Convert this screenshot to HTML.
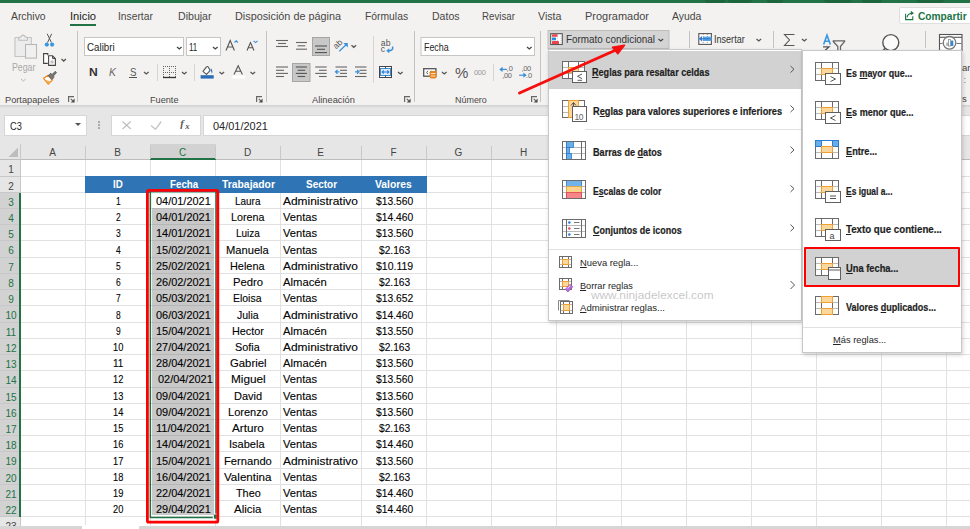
<!DOCTYPE html><html><head><meta charset="utf-8"><style>
*{margin:0;padding:0;box-sizing:border-box}
html,body{width:970px;height:529px;overflow:hidden;background:#fff;font-family:"Liberation Sans", sans-serif;}
.a{position:absolute}
.t{position:absolute;white-space:nowrap;line-height:1}
</style></head><body><div class="a" style="left:0;top:0;width:970px;height:3px;background:#217346"></div>
<svg class="a" style="left:0;top:0" width="970" height="3"><g fill="#1a5a37" opacity="0.55"><ellipse cx="715" cy="1" rx="10" ry="3"/><ellipse cx="740" cy="1" rx="12" ry="3"/><ellipse cx="775" cy="1" rx="8" ry="3"/><ellipse cx="838" cy="1" rx="14" ry="3"/><ellipse cx="872" cy="1" rx="10" ry="3"/><ellipse cx="930" cy="1" rx="14" ry="3"/></g></svg>
<div class="a" style="left:0;top:3px;width:970px;height:102px;background:#f3f2f1"></div>
<div class="a" style="left:0;top:105px;width:970px;height:39px;background:#e6e6e6"></div>
<div class="a" style="left:0;top:105px;width:970px;height:3px;background:linear-gradient(#d0d0d0,#e6e6e6)"></div>
<div class="t" style="left:11.20px;top:10.79px;font-size:10.6px;font-weight:400;color:#484644;transform:scaleX(0.9793);transform-origin:0 0;">Archivo</div>
<div class="t" style="left:69.70px;top:10.79px;font-size:10.6px;font-weight:400;color:#1b1a19;transform:scaleX(1.0548);transform-origin:0 0;">Inicio</div>
<div class="t" style="left:118.40px;top:10.79px;font-size:10.6px;font-weight:400;color:#484644;transform:scaleX(0.9701);transform-origin:0 0;">Insertar</div>
<div class="t" style="left:177.60px;top:10.79px;font-size:10.6px;font-weight:400;color:#484644;transform:scaleX(0.9990);transform-origin:0 0;">Dibujar</div>
<div class="t" style="left:235.30px;top:10.79px;font-size:10.6px;font-weight:400;color:#484644;transform:scaleX(1.0226);transform-origin:0 0;">Disposición de página</div>
<div class="t" style="left:364.60px;top:10.79px;font-size:10.6px;font-weight:400;color:#484644;transform:scaleX(0.9760);transform-origin:0 0;">Fórmulas</div>
<div class="t" style="left:431.60px;top:10.79px;font-size:10.6px;font-weight:400;color:#484644;transform:scaleX(0.9935);transform-origin:0 0;">Datos</div>
<div class="t" style="left:481.90px;top:10.79px;font-size:10.6px;font-weight:400;color:#484644;transform:scaleX(0.9153);transform-origin:0 0;">Revisar</div>
<div class="t" style="left:538.20px;top:10.79px;font-size:10.6px;font-weight:400;color:#484644;transform:scaleX(1.0056);transform-origin:0 0;">Vista</div>
<div class="t" style="left:584.50px;top:10.79px;font-size:10.6px;font-weight:400;color:#484644;transform:scaleX(1.0354);transform-origin:0 0;">Programador</div>
<div class="t" style="left:672.30px;top:10.79px;font-size:10.6px;font-weight:400;color:#484644;transform:scaleX(0.9848);transform-origin:0 0;">Ayuda</div>
<div class="a" style="left:70px;top:24px;width:26px;height:2px;background:#217346"></div>
<div class="a" style="left:899px;top:7px;width:80px;height:17px;background:#fff;border:1px solid #e1dfdd;border-radius:2px"></div>
<svg class="a" style="left:0;top:0" width="970" height="30"><path d="M905.6 13.8 V19.6 H912.8 V16.2" fill="none" stroke="#217346" stroke-width="1.1"/><path d="M907 17.5 Q907.5 13.5 912.5 13" fill="none" stroke="#217346" stroke-width="1.1"/><path d="M910.8 10.8 L914 13.2 L910.8 15.3 Z" fill="#217346"/></svg>
<div class="t" style="left:918.00px;top:10.95px;font-size:11px;font-weight:700;color:#217346;transform:scaleX(0.9253);transform-origin:0 0;">Compartir</div>
<svg class="a" style="left:0;top:0" width="970" height="110"><line x1="77.5" y1="31" x2="77.5" y2="102" stroke="#c6c4c2" stroke-width="1"/><line x1="266.5" y1="31" x2="266.5" y2="102" stroke="#c6c4c2" stroke-width="1"/><line x1="414.5" y1="31" x2="414.5" y2="102" stroke="#c6c4c2" stroke-width="1"/><line x1="540.5" y1="31" x2="540.5" y2="102" stroke="#c6c4c2" stroke-width="1"/><line x1="689.5" y1="31" x2="689.5" y2="48" stroke="#c6c4c2" stroke-width="1"/><line x1="773.5" y1="31" x2="773.5" y2="48" stroke="#c6c4c2" stroke-width="1"/><line x1="925.5" y1="31" x2="925.5" y2="48" stroke="#c6c4c2" stroke-width="1"/><line x1="157.5" y1="64" x2="157.5" y2="81" stroke="#d8d6d4" stroke-width="1"/><line x1="194.5" y1="64" x2="194.5" y2="81" stroke="#d8d6d4" stroke-width="1"/><line x1="373.5" y1="36" x2="373.5" y2="83" stroke="#d8d6d4" stroke-width="1"/><line x1="493.5" y1="64" x2="493.5" y2="81" stroke="#d8d6d4" stroke-width="1"/><path d="M68.6 102 V96.6 H74" fill="none" stroke="#666" stroke-width="1.2"/><path d="M70.8 98.8 L74 102" fill="none" stroke="#666" stroke-width="1.2"/><path d="M74.6 98.6 V102.6 H70.6 Z" fill="#555"/><path d="M256.6 102 V96.6 H262" fill="none" stroke="#666" stroke-width="1.2"/><path d="M258.8 98.8 L262 102" fill="none" stroke="#666" stroke-width="1.2"/><path d="M262.6 98.6 V102.6 H258.6 Z" fill="#555"/><path d="M404.6 102 V96.6 H410" fill="none" stroke="#666" stroke-width="1.2"/><path d="M406.8 98.8 L410 102" fill="none" stroke="#666" stroke-width="1.2"/><path d="M410.6 98.6 V102.6 H406.6 Z" fill="#555"/><path d="M531.6 102 V96.6 H537" fill="none" stroke="#666" stroke-width="1.2"/><path d="M533.8 98.8 L537 102" fill="none" stroke="#666" stroke-width="1.2"/><path d="M537.6 98.6 V102.6 H533.6 Z" fill="#555"/><path d="M15 37.5 H31.3 V56.5 H15 Z" fill="#ececec" stroke="#c4c4c4" stroke-width="1.1"/><path d="M18.8 40.3 V37.3 H20.6 Q23.1 33 25.6 37.3 H27.4 V40.3 Z" fill="#efefef" stroke="#bdbdbd" stroke-width="1.1" stroke-linejoin="round"/><rect x="25.5" y="44.5" width="11" height="13.6" fill="#f0f0f0" stroke="#b8b8b8" stroke-width="1.1"/><path d="M21 79 L23.3 81 L25.6 79" fill="none" stroke="#b5b5b5" stroke-width="1"/><path d="M47.2 33.8 L51.4 42.5 M51.7 33.8 L47.5 42.5" fill="none" stroke="#555" stroke-width="1"/><circle cx="46.8" cy="44.6" r="2.1" fill="#3b97e0"/><circle cx="52.1" cy="44.6" r="2.1" fill="#3b97e0"/><path d="M47.8 55.2 V53.6 H43.6 V63.4 H47.8" fill="#fff" stroke="#444" stroke-width="1.1"/><path d="M48.6 55.8 H52.6 L55.4 58.6 V65.4 H48.6 Z" fill="#fff" stroke="#444" stroke-width="1.1" stroke-linejoin="round"/><path d="M52.6 56 V58.6 H55.2" fill="none" stroke="#444" stroke-width="1"/><path d="M50.5 61.2 H53.5 M50.5 62.8 H53.5" stroke="#999" stroke-width="0.9"/><path d="M61.5 59 L63.7 61 L65.9 59" fill="none" stroke="#555" stroke-width="1.3"/><path d="M43.6 78.3 L48.2 75.3 L52.3 80.1 L48.3 84 Z" fill="#fff" stroke="#e8841a" stroke-width="1.2" stroke-linejoin="round"/><path d="M45.5 80 L51 81.5 L48.3 84 Z" fill="#f6b24a"/><path d="M48.3 75.5 L50.8 73.2 L54.2 77 L52 79.5 Z" fill="#777" stroke="#555" stroke-width="0.8"/><path d="M52 74.6 L55.3 71.3 L56.5 72.7 L53.4 76" fill="#777" stroke="#555" stroke-width="0.8"/><rect x="84.5" y="37.5" width="99" height="18" fill="#fff" stroke="#c8c6c4"/><rect x="186.5" y="37.5" width="34" height="18" fill="#fff" stroke="#c8c6c4"/><path d="M177 47 L179.3 49 L181.6 47" fill="none" stroke="#444" stroke-width="1.3"/><path d="M213 47 L215.3 49 L217.6 47" fill="none" stroke="#444" stroke-width="1.3"/><path d="M226 50.5 L230.2 40.5 L234.4 50.5 M227.6 47 H232.8" fill="none" stroke="#555" stroke-width="1.1"/><path d="M234.5 42.5 L236.2 40.8 L237.9 42.5" fill="none" stroke="#3b8fd9" stroke-width="1.1"/><path d="M247 50.5 L250.5 42.5 L254 50.5 M248.3 47.8 H252.7" fill="none" stroke="#555" stroke-width="1.1"/><path d="M253.6 40.8 L255.6 42.6 L257.6 40.8" fill="none" stroke="#3b8fd9" stroke-width="1.1"/><path d="M351.5 45.3 L353.8 47.3 L356.1 45.3" fill="none" stroke="#555" stroke-width="1.3"/><path d="M144 72 L146.3 74 L148.6 72" fill="none" stroke="#555" stroke-width="1.3"/><path d="M182 72 L184.3 74 L186.6 72" fill="none" stroke="#555" stroke-width="1.3"/><path d="M219.5 72 L221.8 74 L224.1 72" fill="none" stroke="#555" stroke-width="1.3"/><path d="M250.5 72 L252.8 74 L255.1 72" fill="none" stroke="#555" stroke-width="1.3"/><path d="M398 72 L400.3 74 L402.6 72" fill="none" stroke="#555" stroke-width="1.3"/><path d="M442 72 L444.3 74 L446.6 72" fill="none" stroke="#555" stroke-width="1.3"/><g fill="#666"><rect x="163" y="66" width="1" height="1"/><rect x="163" y="72" width="1" height="1"/><rect x="165" y="66" width="1" height="1"/><rect x="165" y="72" width="1" height="1"/><rect x="167" y="66" width="1" height="1"/><rect x="167" y="72" width="1" height="1"/><rect x="169" y="66" width="1" height="1"/><rect x="169" y="72" width="1" height="1"/><rect x="171" y="66" width="1" height="1"/><rect x="171" y="72" width="1" height="1"/><rect x="173" y="66" width="1" height="1"/><rect x="173" y="72" width="1" height="1"/><rect x="175" y="66" width="1" height="1"/><rect x="175" y="72" width="1" height="1"/><rect x="163" y="66" width="1" height="1"/><rect x="175" y="66" width="1" height="1"/><rect x="169" y="66" width="1" height="1"/><rect x="163" y="68" width="1" height="1"/><rect x="175" y="68" width="1" height="1"/><rect x="169" y="68" width="1" height="1"/><rect x="163" y="70" width="1" height="1"/><rect x="175" y="70" width="1" height="1"/><rect x="169" y="70" width="1" height="1"/><rect x="163" y="72" width="1" height="1"/><rect x="175" y="72" width="1" height="1"/><rect x="169" y="72" width="1" height="1"/><rect x="163" y="74" width="1" height="1"/><rect x="175" y="74" width="1" height="1"/><rect x="169" y="74" width="1" height="1"/><rect x="163" y="76" width="1" height="1"/><rect x="175" y="76" width="1" height="1"/><rect x="169" y="76" width="1" height="1"/></g><path d="M163 77.5 H176" stroke="#333" stroke-width="1.3"/><path d="M203 71.3 L206.3 67.2 Q207.5 65.8 208.4 67.2 L209.6 69.5 L210 70.6 L206.5 74.4 Z" fill="#fff" stroke="#555" stroke-width="1.1" stroke-linejoin="round"/><path d="M210.8 68.3 Q213.2 70 212 73.8 Q211.3 71.5 210.6 70.6 Z" fill="#2b7cd3"/><rect x="200.6" y="75.2" width="13.1" height="3.4" fill="#2b6cb8"/><path d="M234 74.5 L238.2 65.8 L242.4 74.5 M235.6 71.3 H240.8" fill="none" stroke="#555" stroke-width="1.1"/><rect x="232.5" y="75.5" width="12.5" height="3" fill="#fff"/><path d="M276 40.5 H288" stroke="#666" stroke-width="1.1"/><path d="M278 43.5 H286" stroke="#666" stroke-width="1.1"/><path d="M276 46.5 H288" stroke="#666" stroke-width="1.1"/><path d="M296 42.5 H307" stroke="#666" stroke-width="1.1"/><path d="M297.6 45.8 H305.3" stroke="#666" stroke-width="1.1"/><path d="M296 49.2 H307" stroke="#666" stroke-width="1.1"/><rect x="312.5" y="37.5" width="17" height="18" fill="#c8c8c8" stroke="#a6a6a6"/><path d="M315 46 H327" stroke="#555" stroke-width="1.1"/><path d="M317 49.3 H325" stroke="#555" stroke-width="1.1"/><path d="M315 52.6 H327" stroke="#555" stroke-width="1.1"/><text x="0" y="0" transform="translate(336.3,49.5) rotate(-45)" font-family="Liberation Sans" font-size="8.5" fill="#555">ab</text><path d="M339.3 51.3 L346.5 44.2" stroke="#3b8fd9" stroke-width="1.2"/><path d="M343.3 43 L347.8 43 L347.8 47.5 Z" fill="#3b8fd9"/><path d="M276 67 H288" stroke="#666" stroke-width="1.1"/><path d="M276 70.3 H284" stroke="#666" stroke-width="1.1"/><path d="M276 73.4 H288" stroke="#666" stroke-width="1.1"/><path d="M276 76.5 H284" stroke="#666" stroke-width="1.1"/><rect x="292.5" y="63.5" width="17.5" height="18" fill="#c8c8c8" stroke="#a6a6a6"/><path d="M295.8 67 H307" stroke="#555" stroke-width="1.1"/><path d="M297.6 70.3 H305.2" stroke="#555" stroke-width="1.1"/><path d="M295.8 73.4 H307" stroke="#555" stroke-width="1.1"/><path d="M297.6 76.5 H305.2" stroke="#555" stroke-width="1.1"/><path d="M315.2 67 H326.7" stroke="#666" stroke-width="1.1"/><path d="M319 70.3 H326.7" stroke="#666" stroke-width="1.1"/><path d="M315.2 73.4 H326.7" stroke="#666" stroke-width="1.1"/><path d="M319 76.5 H326.7" stroke="#666" stroke-width="1.1"/><path d="M335.5 67 H347" stroke="#666" stroke-width="1.1"/><path d="M335.5 76.5 H347" stroke="#666" stroke-width="1.1"/><path d="M340 70.3 H347" stroke="#666" stroke-width="1.1"/><path d="M340 73.4 H347" stroke="#666" stroke-width="1.1"/><path d="M335.5 71.8 H339.5 M337.5 69.8 L335.5 71.8 L337.5 73.8" fill="none" stroke="#3b8fd9" stroke-width="1.2"/><path d="M355 67 H366.5" stroke="#666" stroke-width="1.1"/><path d="M355 76.5 H366.5" stroke="#666" stroke-width="1.1"/><path d="M359.5 70.3 H366.5" stroke="#666" stroke-width="1.1"/><path d="M359.5 73.4 H366.5" stroke="#666" stroke-width="1.1"/><path d="M355 71.8 H359 M357 69.8 L359 71.8 L357 73.8" fill="none" stroke="#3b8fd9" stroke-width="1.2"/><text x="380.8" y="46" font-family="Liberation Sans" font-size="8.6" fill="#555" letter-spacing="0.2">ab</text><text x="380.8" y="52.3" font-family="Liberation Sans" font-size="8.6" fill="#555">c</text><path d="M392.6 46.5 Q393.5 51 388.3 50.8" fill="none" stroke="#3b8fd9" stroke-width="1.5"/><path d="M386.2 50.8 L389.3 48.3 V53.3 Z" fill="#3b8fd9"/><rect x="379.5" y="66.5" width="12" height="11" fill="#fff" stroke="#444" stroke-width="1"/><rect x="380.5" y="68.5" width="10" height="7" fill="#dcecfb" stroke="#3b8fd9" stroke-width="1"/><path d="M385.5 66.5 V68.5 M385.5 75.5 V77.5" stroke="#444"/><path d="M383.5 72 H387.5" stroke="#2b7cd3" stroke-width="1"/><path d="M381.3 72 L383.8 69.8 V74.2 Z M389.7 72 L387.2 69.8 V74.2 Z" fill="#2b7cd3"/><rect x="421" y="37.5" width="113.5" height="18" fill="#fff" stroke="#c8c6c4"/><path d="M527 47 L529.3 49 L531.6 47" fill="none" stroke="#444" stroke-width="1.3"/><rect x="423.7" y="68.7" width="12.2" height="7.5" fill="#fff" stroke="#555" stroke-width="1.3"/><path d="M427.8 70.8 Q425.6 72.4 427.8 74.2 M431.2 70.8 Q429 72.4 431.2 74.2" fill="none" stroke="#555" stroke-width="1"/><rect x="429.6" y="71.1" width="7" height="7.5" rx="1.8" fill="#e8841a"/><path d="M430.8 73.6 H435.4 M430.8 76 H435.4" stroke="#fff" stroke-width="0.8"/><text x="455" y="78.2" font-family="Liberation Sans" font-size="15" fill="#555">%</text><text x="474" y="75" font-family="Liberation Sans" font-size="7.5" fill="#999" letter-spacing="-0.3">000</text><text x="506.6" y="71" font-family="Liberation Sans" font-size="7.5" fill="#666">,0</text><text x="502.3" y="77.8" font-family="Liberation Sans" font-size="7.5" fill="#666" letter-spacing="-0.4">,00</text><path d="M500.5 69.4 H506.9" stroke="#3b8fd9" stroke-width="1.2"/><path d="M499.3 69.4 L502.6 66.8 V72 Z" fill="#3b8fd9"/><text x="521.5" y="71" font-family="Liberation Sans" font-size="7.5" fill="#666" letter-spacing="-0.4">,00</text><text x="525.8" y="77.8" font-family="Liberation Sans" font-size="7.5" fill="#666">.0</text><path d="M519.1 75.2 H525.5" stroke="#3b8fd9" stroke-width="1.2"/><path d="M526.7 75.2 L523.4 72.6 V77.8 Z" fill="#3b8fd9"/></svg>
<div class="t" style="left:12.00px;top:62.84px;font-size:10.3px;font-weight:400;color:#a8a8a8;transform:scaleX(0.8485);transform-origin:0 0;">Pegar</div>
<div class="t" style="left:87.10px;top:41.59px;font-size:10.6px;font-weight:400;color:#262626;transform:scaleX(0.9202);transform-origin:0 0;">Calibri</div>
<div class="t" style="left:189.00px;top:42.19px;font-size:10.6px;font-weight:400;color:#262626;transform:scaleX(0.7564);transform-origin:0 0;">11</div>
<div class="t" style="left:423.60px;top:41.69px;font-size:10.6px;font-weight:400;color:#262626;transform:scaleX(0.8392);transform-origin:0 0;">Fecha</div>
<div class="t" style="left:88.60px;top:66.95px;font-size:11px;font-weight:700;color:#333;transform:scaleX(1.1000);transform-origin:0 0;">N</div>
<div class="t" style="left:109.00px;top:66.95px;font-size:11px;font-weight:400;color:#666;font-style:italic;transform:scaleX(0.9375);transform-origin:0 0;">K</div>
<div class="t" style="left:129.50px;top:66.88px;font-size:10.5px;font-weight:400;color:#555;transform:scaleX(0.9286);transform-origin:0 0;">S</div>
<div class="a" style="left:129px;top:76.5px;width:7.5px;height:1px;background:#555"></div>
<div class="t" style="left:5.10px;top:95.88px;font-size:8.5px;font-weight:400;color:#484644;transform:scaleX(1.0855);transform-origin:0 0;">Portapapeles</div>
<div class="t" style="left:150.40px;top:95.88px;font-size:8.5px;font-weight:400;color:#484644;transform:scaleX(1.0772);transform-origin:0 0;">Fuente</div>
<div class="t" style="left:311.50px;top:95.88px;font-size:8.5px;font-weight:400;color:#484644;transform:scaleX(1.0938);transform-origin:0 0;">Alineación</div>
<div class="t" style="left:454.80px;top:95.88px;font-size:8.5px;font-weight:400;color:#484644;transform:scaleX(1.0523);transform-origin:0 0;">Número</div>
<div class="a" style="left:4px;top:115px;width:83px;height:21px;background:#fff;border:1px solid #d6d6d6"></div>
<div class="t" style="left:9.60px;top:121.09px;font-size:10.6px;font-weight:400;color:#262626;transform:scaleX(0.8718);transform-origin:0 0;">C3</div>
<div class="a" style="left:75px;top:123px;width:0;height:0;border-left:3px solid transparent;border-right:3px solid transparent;border-top:3px solid #555"></div>
<div class="a" style="left:98px;top:121px;width:2px;height:2px;background:#aaa"></div>
<div class="a" style="left:98px;top:124px;width:2px;height:2px;background:#aaa"></div>
<div class="a" style="left:98px;top:127px;width:2px;height:2px;background:#aaa"></div>
<div class="a" style="left:111px;top:115px;width:90px;height:21px;background:#fff;border:1px solid #d6d6d6"></div>
<div class="a" style="left:203px;top:115px;width:780px;height:21px;background:#fff;border:1px solid #d6d6d6"></div>
<div class="t" style="left:213.00px;top:121.09px;font-size:10.6px;font-weight:400;color:#262626;transform:scaleX(1.0352);transform-origin:0 0;">04/01/2021</div>
<svg class="a" style="left:0;top:0" width="300" height="140"><path d="M122.5 121.5 L130.8 129 M130.8 121.5 L122.5 129" stroke="#bdbdbd" stroke-width="1.1"/><path d="M151 125.5 L155.5 129.3 L161.2 121.5" fill="none" stroke="#c4c4c4" stroke-width="1.3"/></svg>
<div class="t" style="left:180.3px;top:118.8px;font-size:10.5px;font-family:'Liberation Serif',serif;font-style:italic;font-weight:bold;color:#555">f</div>
<div class="t" style="left:185.2px;top:122.2px;font-size:8.5px;font-family:'Liberation Serif',serif;font-style:italic;font-weight:bold;color:#555">x</div>
<div class="a" style="left:0;top:144px;width:970px;height:16px;background:#e6e6e6"></div>
<div class="a" style="left:150px;top:144px;width:66px;height:16px;background:#d2d2d2"></div>
<div class="a" style="left:0;top:159px;width:970px;height:1px;background:#bdbdbd"></div>
<div class="a" style="left:150px;top:158px;width:66px;height:2px;background:#217346"></div>
<div class="a" style="left:85px;top:146px;width:1px;height:13px;background:#c8c8c8"></div>
<div class="t" style="left:20px;top:148px;width:65px;text-align:center;font-size:10px;color:#444">A</div>
<div class="a" style="left:150px;top:146px;width:1px;height:13px;background:#c8c8c8"></div>
<div class="t" style="left:85px;top:148px;width:65px;text-align:center;font-size:10px;color:#444">B</div>
<div class="a" style="left:215px;top:146px;width:1px;height:13px;background:#c8c8c8"></div>
<div class="t" style="left:150px;top:148px;width:65px;text-align:center;font-size:10px;color:#217346">C</div>
<div class="a" style="left:280px;top:146px;width:1px;height:13px;background:#c8c8c8"></div>
<div class="t" style="left:215px;top:148px;width:65px;text-align:center;font-size:10px;color:#444">D</div>
<div class="a" style="left:361px;top:146px;width:1px;height:13px;background:#c8c8c8"></div>
<div class="t" style="left:280px;top:148px;width:81px;text-align:center;font-size:10px;color:#444">E</div>
<div class="a" style="left:426px;top:146px;width:1px;height:13px;background:#c8c8c8"></div>
<div class="t" style="left:361px;top:148px;width:65px;text-align:center;font-size:10px;color:#444">F</div>
<div class="a" style="left:491px;top:146px;width:1px;height:13px;background:#c8c8c8"></div>
<div class="t" style="left:426px;top:148px;width:65px;text-align:center;font-size:10px;color:#444">G</div>
<div class="a" style="left:556px;top:146px;width:1px;height:13px;background:#c8c8c8"></div>
<div class="t" style="left:491px;top:148px;width:65px;text-align:center;font-size:10px;color:#444">H</div>
<div class="a" style="left:621px;top:146px;width:1px;height:13px;background:#c8c8c8"></div>
<div class="t" style="left:556px;top:148px;width:65px;text-align:center;font-size:10px;color:#444">I</div>
<div class="a" style="left:686px;top:146px;width:1px;height:13px;background:#c8c8c8"></div>
<div class="t" style="left:621px;top:148px;width:65px;text-align:center;font-size:10px;color:#444">J</div>
<div class="a" style="left:751px;top:146px;width:1px;height:13px;background:#c8c8c8"></div>
<div class="t" style="left:686px;top:148px;width:65px;text-align:center;font-size:10px;color:#444">K</div>
<div class="a" style="left:816px;top:146px;width:1px;height:13px;background:#c8c8c8"></div>
<div class="t" style="left:751px;top:148px;width:65px;text-align:center;font-size:10px;color:#444">L</div>
<div class="a" style="left:881px;top:146px;width:1px;height:13px;background:#c8c8c8"></div>
<div class="t" style="left:816px;top:148px;width:65px;text-align:center;font-size:10px;color:#444">M</div>
<div class="a" style="left:946px;top:146px;width:1px;height:13px;background:#c8c8c8"></div>
<div class="t" style="left:881px;top:148px;width:65px;text-align:center;font-size:10px;color:#444">N</div>
<div class="a" style="left:1011px;top:146px;width:1px;height:13px;background:#c8c8c8"></div>
<div class="t" style="left:946px;top:148px;width:65px;text-align:center;font-size:10px;color:#444">O</div>
<div class="a" style="left:20px;top:144px;width:1px;height:16px;background:#c8c8c8"></div>
<svg class="a" style="left:0;top:144px" width="20" height="16"><path d="M8.5 13 L18 13 L18 3.5 Z" fill="#bdbdbd"/></svg>
<div class="a" style="left:0;top:160px;width:20px;height:369px;background:#e6e6e6"></div>
<div class="a" style="left:0;top:193px;width:20px;height:16px;background:#d2d2d2"></div>
<div class="a" style="left:0;top:209px;width:20px;height:16px;background:#d2d2d2"></div>
<div class="a" style="left:0;top:225px;width:20px;height:16px;background:#d2d2d2"></div>
<div class="a" style="left:0;top:241px;width:20px;height:17px;background:#d2d2d2"></div>
<div class="a" style="left:0;top:258px;width:20px;height:16px;background:#d2d2d2"></div>
<div class="a" style="left:0;top:274px;width:20px;height:16px;background:#d2d2d2"></div>
<div class="a" style="left:0;top:290px;width:20px;height:16px;background:#d2d2d2"></div>
<div class="a" style="left:0;top:306px;width:20px;height:17px;background:#d2d2d2"></div>
<div class="a" style="left:0;top:323px;width:20px;height:16px;background:#d2d2d2"></div>
<div class="a" style="left:0;top:339px;width:20px;height:16px;background:#d2d2d2"></div>
<div class="a" style="left:0;top:355px;width:20px;height:16px;background:#d2d2d2"></div>
<div class="a" style="left:0;top:371px;width:20px;height:17px;background:#d2d2d2"></div>
<div class="a" style="left:0;top:388px;width:20px;height:16px;background:#d2d2d2"></div>
<div class="a" style="left:0;top:404px;width:20px;height:16px;background:#d2d2d2"></div>
<div class="a" style="left:0;top:420px;width:20px;height:16px;background:#d2d2d2"></div>
<div class="a" style="left:0;top:436px;width:20px;height:16px;background:#d2d2d2"></div>
<div class="a" style="left:0;top:452px;width:20px;height:17px;background:#d2d2d2"></div>
<div class="a" style="left:0;top:469px;width:20px;height:16px;background:#d2d2d2"></div>
<div class="a" style="left:0;top:485px;width:20px;height:16px;background:#d2d2d2"></div>
<div class="a" style="left:0;top:501px;width:20px;height:16px;background:#d2d2d2"></div>
<div class="a" style="left:21px;top:176px;width:949px;height:1px;background:#e1e1e1"></div>
<div class="a" style="left:0;top:176px;width:20px;height:1px;background:#c8c8c8"></div>
<div class="a" style="left:21px;top:192px;width:949px;height:1px;background:#e1e1e1"></div>
<div class="a" style="left:0;top:192px;width:20px;height:1px;background:#c8c8c8"></div>
<div class="a" style="left:21px;top:208px;width:949px;height:1px;background:#e1e1e1"></div>
<div class="a" style="left:0;top:208px;width:20px;height:1px;background:#c8c8c8"></div>
<div class="a" style="left:21px;top:224px;width:949px;height:1px;background:#e1e1e1"></div>
<div class="a" style="left:0;top:224px;width:20px;height:1px;background:#c8c8c8"></div>
<div class="a" style="left:21px;top:240px;width:949px;height:1px;background:#e1e1e1"></div>
<div class="a" style="left:0;top:240px;width:20px;height:1px;background:#c8c8c8"></div>
<div class="a" style="left:21px;top:257px;width:949px;height:1px;background:#e1e1e1"></div>
<div class="a" style="left:0;top:257px;width:20px;height:1px;background:#c8c8c8"></div>
<div class="a" style="left:21px;top:273px;width:949px;height:1px;background:#e1e1e1"></div>
<div class="a" style="left:0;top:273px;width:20px;height:1px;background:#c8c8c8"></div>
<div class="a" style="left:21px;top:289px;width:949px;height:1px;background:#e1e1e1"></div>
<div class="a" style="left:0;top:289px;width:20px;height:1px;background:#c8c8c8"></div>
<div class="a" style="left:21px;top:305px;width:949px;height:1px;background:#e1e1e1"></div>
<div class="a" style="left:0;top:305px;width:20px;height:1px;background:#c8c8c8"></div>
<div class="a" style="left:21px;top:322px;width:949px;height:1px;background:#e1e1e1"></div>
<div class="a" style="left:0;top:322px;width:20px;height:1px;background:#c8c8c8"></div>
<div class="a" style="left:21px;top:338px;width:949px;height:1px;background:#e1e1e1"></div>
<div class="a" style="left:0;top:338px;width:20px;height:1px;background:#c8c8c8"></div>
<div class="a" style="left:21px;top:354px;width:949px;height:1px;background:#e1e1e1"></div>
<div class="a" style="left:0;top:354px;width:20px;height:1px;background:#c8c8c8"></div>
<div class="a" style="left:21px;top:370px;width:949px;height:1px;background:#e1e1e1"></div>
<div class="a" style="left:0;top:370px;width:20px;height:1px;background:#c8c8c8"></div>
<div class="a" style="left:21px;top:387px;width:949px;height:1px;background:#e1e1e1"></div>
<div class="a" style="left:0;top:387px;width:20px;height:1px;background:#c8c8c8"></div>
<div class="a" style="left:21px;top:403px;width:949px;height:1px;background:#e1e1e1"></div>
<div class="a" style="left:0;top:403px;width:20px;height:1px;background:#c8c8c8"></div>
<div class="a" style="left:21px;top:419px;width:949px;height:1px;background:#e1e1e1"></div>
<div class="a" style="left:0;top:419px;width:20px;height:1px;background:#c8c8c8"></div>
<div class="a" style="left:21px;top:435px;width:949px;height:1px;background:#e1e1e1"></div>
<div class="a" style="left:0;top:435px;width:20px;height:1px;background:#c8c8c8"></div>
<div class="a" style="left:21px;top:451px;width:949px;height:1px;background:#e1e1e1"></div>
<div class="a" style="left:0;top:451px;width:20px;height:1px;background:#c8c8c8"></div>
<div class="a" style="left:21px;top:468px;width:949px;height:1px;background:#e1e1e1"></div>
<div class="a" style="left:0;top:468px;width:20px;height:1px;background:#c8c8c8"></div>
<div class="a" style="left:21px;top:484px;width:949px;height:1px;background:#e1e1e1"></div>
<div class="a" style="left:0;top:484px;width:20px;height:1px;background:#c8c8c8"></div>
<div class="a" style="left:21px;top:500px;width:949px;height:1px;background:#e1e1e1"></div>
<div class="a" style="left:0;top:500px;width:20px;height:1px;background:#c8c8c8"></div>
<div class="a" style="left:21px;top:516px;width:949px;height:1px;background:#e1e1e1"></div>
<div class="a" style="left:0;top:516px;width:20px;height:1px;background:#c8c8c8"></div>
<div class="a" style="left:85px;top:160px;width:1px;height:369px;background:#e1e1e1"></div>
<div class="a" style="left:150px;top:160px;width:1px;height:369px;background:#e1e1e1"></div>
<div class="a" style="left:215px;top:160px;width:1px;height:369px;background:#e1e1e1"></div>
<div class="a" style="left:280px;top:160px;width:1px;height:369px;background:#e1e1e1"></div>
<div class="a" style="left:361px;top:160px;width:1px;height:369px;background:#e1e1e1"></div>
<div class="a" style="left:426px;top:160px;width:1px;height:369px;background:#e1e1e1"></div>
<div class="a" style="left:491px;top:160px;width:1px;height:369px;background:#e1e1e1"></div>
<div class="a" style="left:556px;top:160px;width:1px;height:369px;background:#e1e1e1"></div>
<div class="a" style="left:621px;top:160px;width:1px;height:369px;background:#e1e1e1"></div>
<div class="a" style="left:686px;top:160px;width:1px;height:369px;background:#e1e1e1"></div>
<div class="a" style="left:751px;top:160px;width:1px;height:369px;background:#e1e1e1"></div>
<div class="a" style="left:816px;top:160px;width:1px;height:369px;background:#e1e1e1"></div>
<div class="a" style="left:881px;top:160px;width:1px;height:369px;background:#e1e1e1"></div>
<div class="a" style="left:946px;top:160px;width:1px;height:369px;background:#e1e1e1"></div>
<div class="a" style="left:1011px;top:160px;width:1px;height:369px;background:#e1e1e1"></div>
<div class="a" style="left:20px;top:160px;width:1px;height:369px;background:#c8c8c8"></div>
<div class="a" style="left:19px;top:193px;width:2px;height:324px;background:#217346"></div>
<div class="t" style="left:1px;top:164.5px;width:20px;text-align:center;font-size:10px;color:#444">1</div>
<div class="t" style="left:1px;top:181.5px;width:20px;text-align:center;font-size:10px;color:#444">2</div>
<div class="t" style="left:1px;top:197.5px;width:20px;text-align:center;font-size:10px;color:#217346">3</div>
<div class="t" style="left:1px;top:213.5px;width:20px;text-align:center;font-size:10px;color:#217346">4</div>
<div class="t" style="left:1px;top:229.5px;width:20px;text-align:center;font-size:10px;color:#217346">5</div>
<div class="t" style="left:1px;top:245.5px;width:20px;text-align:center;font-size:10px;color:#217346">6</div>
<div class="t" style="left:1px;top:262.5px;width:20px;text-align:center;font-size:10px;color:#217346">7</div>
<div class="t" style="left:1px;top:278.5px;width:20px;text-align:center;font-size:10px;color:#217346">8</div>
<div class="t" style="left:1px;top:294.5px;width:20px;text-align:center;font-size:10px;color:#217346">9</div>
<div class="t" style="left:1px;top:310.5px;width:20px;text-align:center;font-size:10px;color:#217346">10</div>
<div class="t" style="left:1px;top:327.5px;width:20px;text-align:center;font-size:10px;color:#217346">11</div>
<div class="t" style="left:1px;top:343.5px;width:20px;text-align:center;font-size:10px;color:#217346">12</div>
<div class="t" style="left:1px;top:359.5px;width:20px;text-align:center;font-size:10px;color:#217346">13</div>
<div class="t" style="left:1px;top:375.5px;width:20px;text-align:center;font-size:10px;color:#217346">14</div>
<div class="t" style="left:1px;top:392.5px;width:20px;text-align:center;font-size:10px;color:#217346">15</div>
<div class="t" style="left:1px;top:408.5px;width:20px;text-align:center;font-size:10px;color:#217346">16</div>
<div class="t" style="left:1px;top:424.5px;width:20px;text-align:center;font-size:10px;color:#217346">17</div>
<div class="t" style="left:1px;top:440.5px;width:20px;text-align:center;font-size:10px;color:#217346">18</div>
<div class="t" style="left:1px;top:456.5px;width:20px;text-align:center;font-size:10px;color:#217346">19</div>
<div class="t" style="left:1px;top:473.5px;width:20px;text-align:center;font-size:10px;color:#217346">20</div>
<div class="t" style="left:1px;top:489.5px;width:20px;text-align:center;font-size:10px;color:#217346">21</div>
<div class="t" style="left:1px;top:505.5px;width:20px;text-align:center;font-size:10px;color:#217346">22</div>
<div class="t" style="left:1px;top:521.5px;width:20px;text-align:center;font-size:10px;color:#444">23</div>
<div class="a" style="left:85px;top:176px;width:342px;height:17px;background:#2f75b5"></div>
<div class="t" style="left:113.40px;top:180.46px;font-size:10.4px;font-weight:700;color:#fff;transform:scaleX(0.9369);transform-origin:0 0;">ID</div>
<div class="t" style="left:169.60px;top:180.46px;font-size:10.4px;font-weight:700;color:#fff;transform:scaleX(0.9388);transform-origin:0 0;">Fecha</div>
<div class="t" style="left:222.40px;top:180.46px;font-size:10.4px;font-weight:700;color:#fff;transform:scaleX(0.9966);transform-origin:0 0;">Trabajador</div>
<div class="t" style="left:305.80px;top:180.46px;font-size:10.4px;font-weight:700;color:#fff;transform:scaleX(0.9599);transform-origin:0 0;">Sector</div>
<div class="t" style="left:375.30px;top:180.46px;font-size:10.4px;font-weight:700;color:#fff;transform:scaleX(0.9922);transform-origin:0 0;">Valores</div>
<div class="a" style="left:152px;top:208px;width:62px;height:307px;background:#c8c8c8"></div>
<div class="a" style="left:152px;top:208px;width:62px;height:1px;background:#b6b6b6"></div>
<div class="a" style="left:152px;top:224px;width:62px;height:1px;background:#b6b6b6"></div>
<div class="a" style="left:152px;top:240px;width:62px;height:1px;background:#b6b6b6"></div>
<div class="a" style="left:152px;top:257px;width:62px;height:1px;background:#b6b6b6"></div>
<div class="a" style="left:152px;top:273px;width:62px;height:1px;background:#b6b6b6"></div>
<div class="a" style="left:152px;top:289px;width:62px;height:1px;background:#b6b6b6"></div>
<div class="a" style="left:152px;top:305px;width:62px;height:1px;background:#b6b6b6"></div>
<div class="a" style="left:152px;top:322px;width:62px;height:1px;background:#b6b6b6"></div>
<div class="a" style="left:152px;top:338px;width:62px;height:1px;background:#b6b6b6"></div>
<div class="a" style="left:152px;top:354px;width:62px;height:1px;background:#b6b6b6"></div>
<div class="a" style="left:152px;top:370px;width:62px;height:1px;background:#b6b6b6"></div>
<div class="a" style="left:152px;top:387px;width:62px;height:1px;background:#b6b6b6"></div>
<div class="a" style="left:152px;top:403px;width:62px;height:1px;background:#b6b6b6"></div>
<div class="a" style="left:152px;top:419px;width:62px;height:1px;background:#b6b6b6"></div>
<div class="a" style="left:152px;top:435px;width:62px;height:1px;background:#b6b6b6"></div>
<div class="a" style="left:152px;top:451px;width:62px;height:1px;background:#b6b6b6"></div>
<div class="a" style="left:152px;top:468px;width:62px;height:1px;background:#b6b6b6"></div>
<div class="a" style="left:152px;top:484px;width:62px;height:1px;background:#b6b6b6"></div>
<div class="a" style="left:152px;top:500px;width:62px;height:1px;background:#b6b6b6"></div>
<div class="t" style="left:115.60px;top:195.91px;font-size:11px;font-weight:400;color:#000;transform:scaleX(0.7667);transform-origin:0 0;-webkit-text-stroke:0.12px #111;">1</div>
<div class="t" style="left:156.30px;top:195.91px;font-size:11px;font-weight:400;color:#000;transform:scaleX(0.9939);transform-origin:0 0;-webkit-text-stroke:0.12px #111;">04/01/2021</div>
<div class="t" style="left:234.90px;top:195.91px;font-size:11px;font-weight:400;color:#000;transform:scaleX(0.9029);transform-origin:0 0;-webkit-text-stroke:0.12px #111;">Laura</div>
<div class="t" style="left:282.80px;top:195.91px;font-size:11px;font-weight:400;color:#000;transform:scaleX(1.0847);transform-origin:0 0;-webkit-text-stroke:0.12px #111;">Administrativo</div>
<div class="t" style="left:375.70px;top:195.91px;font-size:11px;font-weight:400;color:#000;transform:scaleX(0.9358);transform-origin:0 0;-webkit-text-stroke:0.12px #111;">$13.560</div>
<div class="t" style="left:115.60px;top:212.14px;font-size:11px;font-weight:400;color:#000;transform:scaleX(0.7667);transform-origin:0 0;-webkit-text-stroke:0.12px #111;">2</div>
<div class="t" style="left:156.30px;top:212.14px;font-size:11px;font-weight:400;color:#000;transform:scaleX(0.9939);transform-origin:0 0;-webkit-text-stroke:0.12px #111;">04/01/2021</div>
<div class="t" style="left:230.90px;top:212.14px;font-size:11px;font-weight:400;color:#000;transform:scaleX(0.9734);transform-origin:0 0;-webkit-text-stroke:0.12px #111;">Lorena</div>
<div class="t" style="left:282.80px;top:212.14px;font-size:11px;font-weight:400;color:#000;transform:scaleX(1.0106);transform-origin:0 0;-webkit-text-stroke:0.12px #111;">Ventas</div>
<div class="t" style="left:375.70px;top:212.14px;font-size:11px;font-weight:400;color:#000;transform:scaleX(0.9358);transform-origin:0 0;-webkit-text-stroke:0.12px #111;">$14.460</div>
<div class="t" style="left:115.60px;top:228.37px;font-size:11px;font-weight:400;color:#000;transform:scaleX(0.7667);transform-origin:0 0;-webkit-text-stroke:0.12px #111;">3</div>
<div class="t" style="left:156.30px;top:228.37px;font-size:11px;font-weight:400;color:#000;transform:scaleX(0.9939);transform-origin:0 0;-webkit-text-stroke:0.12px #111;">14/01/2021</div>
<div class="t" style="left:235.70px;top:228.37px;font-size:11px;font-weight:400;color:#000;transform:scaleX(0.9051);transform-origin:0 0;-webkit-text-stroke:0.12px #111;">Luiza</div>
<div class="t" style="left:282.80px;top:228.37px;font-size:11px;font-weight:400;color:#000;transform:scaleX(1.0106);transform-origin:0 0;-webkit-text-stroke:0.12px #111;">Ventas</div>
<div class="t" style="left:375.70px;top:228.37px;font-size:11px;font-weight:400;color:#000;transform:scaleX(0.9358);transform-origin:0 0;-webkit-text-stroke:0.12px #111;">$13.560</div>
<div class="t" style="left:115.60px;top:244.60px;font-size:11px;font-weight:400;color:#000;transform:scaleX(0.7667);transform-origin:0 0;-webkit-text-stroke:0.12px #111;">4</div>
<div class="t" style="left:156.30px;top:244.60px;font-size:11px;font-weight:400;color:#000;transform:scaleX(0.9939);transform-origin:0 0;-webkit-text-stroke:0.12px #111;">15/02/2021</div>
<div class="t" style="left:226.15px;top:244.60px;font-size:11px;font-weight:400;color:#000;transform:scaleX(1.0144);transform-origin:0 0;-webkit-text-stroke:0.12px #111;">Manuela</div>
<div class="t" style="left:282.80px;top:244.60px;font-size:11px;font-weight:400;color:#000;transform:scaleX(1.0106);transform-origin:0 0;-webkit-text-stroke:0.12px #111;">Ventas</div>
<div class="t" style="left:378.70px;top:244.60px;font-size:11px;font-weight:400;color:#000;transform:scaleX(0.9276);transform-origin:0 0;-webkit-text-stroke:0.12px #111;">$2.163</div>
<div class="t" style="left:115.60px;top:260.83px;font-size:11px;font-weight:400;color:#000;transform:scaleX(0.7667);transform-origin:0 0;-webkit-text-stroke:0.12px #111;">5</div>
<div class="t" style="left:156.30px;top:260.83px;font-size:11px;font-weight:400;color:#000;transform:scaleX(0.9939);transform-origin:0 0;-webkit-text-stroke:0.12px #111;">25/02/2021</div>
<div class="t" style="left:230.30px;top:260.83px;font-size:11px;font-weight:400;color:#000;transform:scaleX(0.9905);transform-origin:0 0;-webkit-text-stroke:0.12px #111;">Helena</div>
<div class="t" style="left:282.80px;top:260.83px;font-size:11px;font-weight:400;color:#000;transform:scaleX(1.0847);transform-origin:0 0;-webkit-text-stroke:0.12px #111;">Administrativo</div>
<div class="t" style="left:375.70px;top:260.83px;font-size:11px;font-weight:400;color:#000;transform:scaleX(0.9555);transform-origin:0 0;-webkit-text-stroke:0.12px #111;">$10.119</div>
<div class="t" style="left:115.60px;top:277.06px;font-size:11px;font-weight:400;color:#000;transform:scaleX(0.7667);transform-origin:0 0;-webkit-text-stroke:0.12px #111;">6</div>
<div class="t" style="left:156.30px;top:277.06px;font-size:11px;font-weight:400;color:#000;transform:scaleX(0.9939);transform-origin:0 0;-webkit-text-stroke:0.12px #111;">26/02/2021</div>
<div class="t" style="left:233.05px;top:277.06px;font-size:11px;font-weight:400;color:#000;transform:scaleX(1.0227);transform-origin:0 0;-webkit-text-stroke:0.12px #111;">Pedro</div>
<div class="t" style="left:282.80px;top:277.06px;font-size:11px;font-weight:400;color:#000;transform:scaleX(1.0239);transform-origin:0 0;-webkit-text-stroke:0.12px #111;">Almacén</div>
<div class="t" style="left:378.70px;top:277.06px;font-size:11px;font-weight:400;color:#000;transform:scaleX(0.9276);transform-origin:0 0;-webkit-text-stroke:0.12px #111;">$2.163</div>
<div class="t" style="left:115.60px;top:293.29px;font-size:11px;font-weight:400;color:#000;transform:scaleX(0.7667);transform-origin:0 0;-webkit-text-stroke:0.12px #111;">7</div>
<div class="t" style="left:156.30px;top:293.29px;font-size:11px;font-weight:400;color:#000;transform:scaleX(0.9939);transform-origin:0 0;-webkit-text-stroke:0.12px #111;">05/03/2021</div>
<div class="t" style="left:233.35px;top:293.29px;font-size:11px;font-weight:400;color:#000;transform:scaleX(0.9500);transform-origin:0 0;-webkit-text-stroke:0.12px #111;">Eloisa</div>
<div class="t" style="left:282.80px;top:293.29px;font-size:11px;font-weight:400;color:#000;transform:scaleX(1.0106);transform-origin:0 0;-webkit-text-stroke:0.12px #111;">Ventas</div>
<div class="t" style="left:375.70px;top:293.29px;font-size:11px;font-weight:400;color:#000;transform:scaleX(0.9358);transform-origin:0 0;-webkit-text-stroke:0.12px #111;">$13.652</div>
<div class="t" style="left:115.60px;top:309.52px;font-size:11px;font-weight:400;color:#000;transform:scaleX(0.7667);transform-origin:0 0;-webkit-text-stroke:0.12px #111;">8</div>
<div class="t" style="left:156.30px;top:309.52px;font-size:11px;font-weight:400;color:#000;transform:scaleX(0.9939);transform-origin:0 0;-webkit-text-stroke:0.12px #111;">06/03/2021</div>
<div class="t" style="left:236.75px;top:309.52px;font-size:11px;font-weight:400;color:#000;transform:scaleX(0.9572);transform-origin:0 0;-webkit-text-stroke:0.12px #111;">Julia</div>
<div class="t" style="left:282.80px;top:309.52px;font-size:11px;font-weight:400;color:#000;transform:scaleX(1.0847);transform-origin:0 0;-webkit-text-stroke:0.12px #111;">Administrativo</div>
<div class="t" style="left:375.70px;top:309.52px;font-size:11px;font-weight:400;color:#000;transform:scaleX(0.9358);transform-origin:0 0;-webkit-text-stroke:0.12px #111;">$14.460</div>
<div class="t" style="left:115.60px;top:325.75px;font-size:11px;font-weight:400;color:#000;transform:scaleX(0.7667);transform-origin:0 0;-webkit-text-stroke:0.12px #111;">9</div>
<div class="t" style="left:156.30px;top:325.75px;font-size:11px;font-weight:400;color:#000;transform:scaleX(0.9939);transform-origin:0 0;-webkit-text-stroke:0.12px #111;">15/04/2021</div>
<div class="t" style="left:231.85px;top:325.75px;font-size:11px;font-weight:400;color:#000;transform:scaleX(0.9867);transform-origin:0 0;-webkit-text-stroke:0.12px #111;">Hector</div>
<div class="t" style="left:282.80px;top:325.75px;font-size:11px;font-weight:400;color:#000;transform:scaleX(1.0239);transform-origin:0 0;-webkit-text-stroke:0.12px #111;">Almacén</div>
<div class="t" style="left:375.70px;top:325.75px;font-size:11px;font-weight:400;color:#000;transform:scaleX(0.9358);transform-origin:0 0;-webkit-text-stroke:0.12px #111;">$13.550</div>
<div class="t" style="left:112.80px;top:341.98px;font-size:11px;font-weight:400;color:#000;transform:scaleX(0.8417);transform-origin:0 0;-webkit-text-stroke:0.12px #111;">10</div>
<div class="t" style="left:156.30px;top:341.98px;font-size:11px;font-weight:400;color:#000;transform:scaleX(0.9939);transform-origin:0 0;-webkit-text-stroke:0.12px #111;">27/04/2021</div>
<div class="t" style="left:235.20px;top:341.98px;font-size:11px;font-weight:400;color:#000;transform:scaleX(0.9863);transform-origin:0 0;-webkit-text-stroke:0.12px #111;">Sofia</div>
<div class="t" style="left:282.80px;top:341.98px;font-size:11px;font-weight:400;color:#000;transform:scaleX(1.0847);transform-origin:0 0;-webkit-text-stroke:0.12px #111;">Administrativo</div>
<div class="t" style="left:378.70px;top:341.98px;font-size:11px;font-weight:400;color:#000;transform:scaleX(0.9276);transform-origin:0 0;-webkit-text-stroke:0.12px #111;">$2.163</div>
<div class="t" style="left:112.80px;top:358.21px;font-size:11px;font-weight:400;color:#000;transform:scaleX(0.9026);transform-origin:0 0;-webkit-text-stroke:0.12px #111;">11</div>
<div class="t" style="left:156.30px;top:358.21px;font-size:11px;font-weight:400;color:#000;transform:scaleX(0.9939);transform-origin:0 0;-webkit-text-stroke:0.12px #111;">28/04/2021</div>
<div class="t" style="left:230.00px;top:358.21px;font-size:11px;font-weight:400;color:#000;transform:scaleX(1.0281);transform-origin:0 0;-webkit-text-stroke:0.12px #111;">Gabriel</div>
<div class="t" style="left:282.80px;top:358.21px;font-size:11px;font-weight:400;color:#000;transform:scaleX(1.0239);transform-origin:0 0;-webkit-text-stroke:0.12px #111;">Almacén</div>
<div class="t" style="left:375.70px;top:358.21px;font-size:11px;font-weight:400;color:#000;transform:scaleX(0.9358);transform-origin:0 0;-webkit-text-stroke:0.12px #111;">$13.560</div>
<div class="t" style="left:112.80px;top:374.44px;font-size:11px;font-weight:400;color:#000;transform:scaleX(0.8417);transform-origin:0 0;-webkit-text-stroke:0.12px #111;">12</div>
<div class="t" style="left:158.30px;top:374.44px;font-size:11px;font-weight:400;color:#000;transform:scaleX(0.9939);transform-origin:0 0;-webkit-text-stroke:0.12px #111;">02/04/2021</div>
<div class="t" style="left:230.90px;top:374.44px;font-size:11px;font-weight:400;color:#000;transform:scaleX(1.0701);transform-origin:0 0;-webkit-text-stroke:0.12px #111;">Miguel</div>
<div class="t" style="left:282.80px;top:374.44px;font-size:11px;font-weight:400;color:#000;transform:scaleX(1.0106);transform-origin:0 0;-webkit-text-stroke:0.12px #111;">Ventas</div>
<div class="t" style="left:375.70px;top:374.44px;font-size:11px;font-weight:400;color:#000;transform:scaleX(0.9358);transform-origin:0 0;-webkit-text-stroke:0.12px #111;">$13.560</div>
<div class="t" style="left:112.80px;top:390.67px;font-size:11px;font-weight:400;color:#000;transform:scaleX(0.8417);transform-origin:0 0;-webkit-text-stroke:0.12px #111;">13</div>
<div class="t" style="left:156.30px;top:390.67px;font-size:11px;font-weight:400;color:#000;transform:scaleX(0.9939);transform-origin:0 0;-webkit-text-stroke:0.12px #111;">09/04/2021</div>
<div class="t" style="left:234.00px;top:390.67px;font-size:11px;font-weight:400;color:#000;transform:scaleX(0.9998);transform-origin:0 0;-webkit-text-stroke:0.12px #111;">David</div>
<div class="t" style="left:282.80px;top:390.67px;font-size:11px;font-weight:400;color:#000;transform:scaleX(1.0106);transform-origin:0 0;-webkit-text-stroke:0.12px #111;">Ventas</div>
<div class="t" style="left:375.70px;top:390.67px;font-size:11px;font-weight:400;color:#000;transform:scaleX(0.9358);transform-origin:0 0;-webkit-text-stroke:0.12px #111;">$13.560</div>
<div class="t" style="left:112.80px;top:406.90px;font-size:11px;font-weight:400;color:#000;transform:scaleX(0.8417);transform-origin:0 0;-webkit-text-stroke:0.12px #111;">14</div>
<div class="t" style="left:156.30px;top:406.90px;font-size:11px;font-weight:400;color:#000;transform:scaleX(0.9939);transform-origin:0 0;-webkit-text-stroke:0.12px #111;">09/04/2021</div>
<div class="t" style="left:228.15px;top:406.90px;font-size:11px;font-weight:400;color:#000;transform:scaleX(1.0017);transform-origin:0 0;-webkit-text-stroke:0.12px #111;">Lorenzo</div>
<div class="t" style="left:282.80px;top:406.90px;font-size:11px;font-weight:400;color:#000;transform:scaleX(1.0106);transform-origin:0 0;-webkit-text-stroke:0.12px #111;">Ventas</div>
<div class="t" style="left:375.70px;top:406.90px;font-size:11px;font-weight:400;color:#000;transform:scaleX(0.9358);transform-origin:0 0;-webkit-text-stroke:0.12px #111;">$13.560</div>
<div class="t" style="left:112.80px;top:423.13px;font-size:11px;font-weight:400;color:#000;transform:scaleX(0.8417);transform-origin:0 0;-webkit-text-stroke:0.12px #111;">15</div>
<div class="t" style="left:156.30px;top:423.13px;font-size:11px;font-weight:400;color:#000;transform:scaleX(1.0089);transform-origin:0 0;-webkit-text-stroke:0.12px #111;">11/04/2021</div>
<div class="t" style="left:232.15px;top:423.13px;font-size:11px;font-weight:400;color:#000;transform:scaleX(1.0624);transform-origin:0 0;-webkit-text-stroke:0.12px #111;">Arturo</div>
<div class="t" style="left:282.80px;top:423.13px;font-size:11px;font-weight:400;color:#000;transform:scaleX(1.0106);transform-origin:0 0;-webkit-text-stroke:0.12px #111;">Ventas</div>
<div class="t" style="left:378.70px;top:423.13px;font-size:11px;font-weight:400;color:#000;transform:scaleX(0.9276);transform-origin:0 0;-webkit-text-stroke:0.12px #111;">$2.163</div>
<div class="t" style="left:112.80px;top:439.36px;font-size:11px;font-weight:400;color:#000;transform:scaleX(0.8417);transform-origin:0 0;-webkit-text-stroke:0.12px #111;">16</div>
<div class="t" style="left:156.30px;top:439.36px;font-size:11px;font-weight:400;color:#000;transform:scaleX(0.9939);transform-origin:0 0;-webkit-text-stroke:0.12px #111;">14/04/2021</div>
<div class="t" style="left:229.30px;top:439.36px;font-size:11px;font-weight:400;color:#000;transform:scaleX(1.0013);transform-origin:0 0;-webkit-text-stroke:0.12px #111;">Isabela</div>
<div class="t" style="left:282.80px;top:439.36px;font-size:11px;font-weight:400;color:#000;transform:scaleX(1.0106);transform-origin:0 0;-webkit-text-stroke:0.12px #111;">Ventas</div>
<div class="t" style="left:375.70px;top:439.36px;font-size:11px;font-weight:400;color:#000;transform:scaleX(0.9358);transform-origin:0 0;-webkit-text-stroke:0.12px #111;">$14.460</div>
<div class="t" style="left:112.80px;top:455.59px;font-size:11px;font-weight:400;color:#000;transform:scaleX(0.8417);transform-origin:0 0;-webkit-text-stroke:0.12px #111;">17</div>
<div class="t" style="left:156.30px;top:455.59px;font-size:11px;font-weight:400;color:#000;transform:scaleX(0.9939);transform-origin:0 0;-webkit-text-stroke:0.12px #111;">15/04/2021</div>
<div class="t" style="left:224.15px;top:455.59px;font-size:11px;font-weight:400;color:#000;transform:scaleX(1.0155);transform-origin:0 0;-webkit-text-stroke:0.12px #111;">Fernando</div>
<div class="t" style="left:282.80px;top:455.59px;font-size:11px;font-weight:400;color:#000;transform:scaleX(1.0847);transform-origin:0 0;-webkit-text-stroke:0.12px #111;">Administrativo</div>
<div class="t" style="left:375.70px;top:455.59px;font-size:11px;font-weight:400;color:#000;transform:scaleX(0.9358);transform-origin:0 0;-webkit-text-stroke:0.12px #111;">$13.560</div>
<div class="t" style="left:112.80px;top:471.82px;font-size:11px;font-weight:400;color:#000;transform:scaleX(0.8417);transform-origin:0 0;-webkit-text-stroke:0.12px #111;">18</div>
<div class="t" style="left:156.30px;top:471.82px;font-size:11px;font-weight:400;color:#000;transform:scaleX(0.9939);transform-origin:0 0;-webkit-text-stroke:0.12px #111;">16/04/2021</div>
<div class="t" style="left:223.80px;top:471.82px;font-size:11px;font-weight:400;color:#000;transform:scaleX(1.0537);transform-origin:0 0;-webkit-text-stroke:0.12px #111;">Valentina</div>
<div class="t" style="left:282.80px;top:471.82px;font-size:11px;font-weight:400;color:#000;transform:scaleX(1.0106);transform-origin:0 0;-webkit-text-stroke:0.12px #111;">Ventas</div>
<div class="t" style="left:378.70px;top:471.82px;font-size:11px;font-weight:400;color:#000;transform:scaleX(0.9276);transform-origin:0 0;-webkit-text-stroke:0.12px #111;">$2.163</div>
<div class="t" style="left:112.80px;top:488.05px;font-size:11px;font-weight:400;color:#000;transform:scaleX(0.8417);transform-origin:0 0;-webkit-text-stroke:0.12px #111;">19</div>
<div class="t" style="left:156.30px;top:488.05px;font-size:11px;font-weight:400;color:#000;transform:scaleX(0.9939);transform-origin:0 0;-webkit-text-stroke:0.12px #111;">22/04/2021</div>
<div class="t" style="left:235.70px;top:488.05px;font-size:11px;font-weight:400;color:#000;transform:scaleX(0.9858);transform-origin:0 0;-webkit-text-stroke:0.12px #111;">Theo</div>
<div class="t" style="left:282.80px;top:488.05px;font-size:11px;font-weight:400;color:#000;transform:scaleX(1.0106);transform-origin:0 0;-webkit-text-stroke:0.12px #111;">Ventas</div>
<div class="t" style="left:375.70px;top:488.05px;font-size:11px;font-weight:400;color:#000;transform:scaleX(0.9358);transform-origin:0 0;-webkit-text-stroke:0.12px #111;">$14.460</div>
<div class="t" style="left:112.80px;top:504.28px;font-size:11px;font-weight:400;color:#000;transform:scaleX(0.8417);transform-origin:0 0;-webkit-text-stroke:0.12px #111;">20</div>
<div class="t" style="left:156.30px;top:504.28px;font-size:11px;font-weight:400;color:#000;transform:scaleX(0.9939);transform-origin:0 0;-webkit-text-stroke:0.12px #111;">29/04/2021</div>
<div class="t" style="left:233.85px;top:504.28px;font-size:11px;font-weight:400;color:#000;transform:scaleX(1.0416);transform-origin:0 0;-webkit-text-stroke:0.12px #111;">Alicia</div>
<div class="t" style="left:282.80px;top:504.28px;font-size:11px;font-weight:400;color:#000;transform:scaleX(1.0106);transform-origin:0 0;-webkit-text-stroke:0.12px #111;">Ventas</div>
<div class="t" style="left:375.70px;top:504.28px;font-size:11px;font-weight:400;color:#000;transform:scaleX(0.9358);transform-origin:0 0;-webkit-text-stroke:0.12px #111;">$14.460</div>
<svg class="a" style="left:0;top:0" width="970" height="529"><path d="M151 192.6 H215.5" stroke="#9cc5aa" stroke-width="1"/><path d="M150.35 192 V518.15 M149.6 517.4 H212.8 M216.0 192 V513.6" stroke="#217346" stroke-width="1.5" fill="none"/><rect x="213.9" y="514.5" width="2.9" height="4.2" fill="#217346"/><rect x="147.4" y="190.4" width="70.4" height="331.8" rx="1.5" fill="none" stroke="#ff0000" stroke-width="2.8"/></svg>
<svg class="a" style="left:0;top:0" width="970" height="110"><rect x="548" y="30.5" width="121" height="18" fill="#d4d4d4" stroke="#bdbdbd"/><rect x="550.7" y="33.7" width="11.6" height="10.8" fill="#fff" stroke="#555" stroke-width="1.1"/><path d="M557.5 34 V44 M561 34 V44" stroke="#bbb" stroke-width="0.8" stroke-dasharray="1 1"/><rect x="552" y="34.2" width="5.5" height="2.6" rx="0.6" fill="#e8434b"/><rect x="552" y="37.5" width="4" height="2.8" fill="#2b8ae0"/><rect x="552" y="41.1" width="7" height="3" rx="0.6" fill="#e8434b"/><path d="M658.5 39 L660.8 41 L663.1 39" fill="none" stroke="#444" stroke-width="1.2"/><rect x="698.8" y="33.6" width="12.6" height="10.8" fill="#fff" stroke="#555" stroke-width="1.1"/><rect x="703" y="36.6" width="8.5" height="4.4" fill="#5aa5e6"/><path d="M703.2 34 V44 M707.3 34 V44" stroke="#777" stroke-width="0.7" stroke-dasharray="1 1"/><path d="M700.5 38.8 H710.5" stroke="#2b7cd3" stroke-width="1.2"/><path d="M698.8 38.8 L702 36 V41.6 Z" fill="#2b7cd3"/><path d="M756.5 39 L758.8 41 L761.1 39" fill="none" stroke="#555" stroke-width="1.3"/><path d="M794.5 34.5 H784.5 L789.5 40 L784.5 45.5 H794.5" fill="none" stroke="#555" stroke-width="1.1"/><path d="M802 39 L804.3 41 L806.6 39" fill="none" stroke="#555" stroke-width="1.3"/><path d="M823.6 44.6 L827 35.2 L830.4 44.6 M824.8 41.2 H829.2" fill="none" stroke="#3b97e0" stroke-width="1.6"/><path d="M823 46.8 H829 L824.5 51" fill="none" stroke="#555" stroke-width="1.3"/><path d="M833.5 40.8 Q833 40.6 833.3 41.5 L837.8 46.5 V51 M845 40.8 L840.5 46.5 V51 M833.3 40.8 H845.2" fill="#fff" stroke="#666" stroke-width="1.3" stroke-linejoin="round"/><circle cx="890.8" cy="42.6" r="8" fill="#fafafa" stroke="#555" stroke-width="1.4"/><path d="M885 48.5 L882.5 51" stroke="#555" stroke-width="1.6"/><rect x="939.5" y="34.5" width="22.5" height="16" fill="#fff" stroke="#555" stroke-width="1.1"/><path d="M939.5 37.3 H962" stroke="#555" stroke-width="1.1"/><path d="M940 43.5 H942.5 M956.5 43.5 H961.5" stroke="#777" stroke-width="1"/><circle cx="949.5" cy="42.8" r="6.3" fill="#fff" stroke="#777" stroke-width="1.3"/><rect x="946.3" y="42.5" width="1.6" height="3.5" fill="#aaa"/><rect x="948.4" y="39.6" width="2" height="6.4" fill="#fff" stroke="#888" stroke-width="0.8"/><rect x="951" y="40.6" width="2.3" height="5.4" fill="#2b8ae0"/></svg>
<div class="t" style="left:565.60px;top:35.33px;font-size:10.2px;font-weight:400;color:#333;transform:scaleX(0.9708);transform-origin:0 0;">Formato condicional</div>
<div class="t" style="left:714.30px;top:34.90px;font-size:10px;font-weight:400;color:#333;transform:scaleX(0.9054);transform-origin:0 0;">Insertar</div>
<div class="t" style="left:962.00px;top:62.52px;font-size:9.5px;font-weight:400;color:#444;">ar</div>
<div class="t" style="left:963.50px;top:75.85px;font-size:9px;font-weight:400;color:#777;">:</div>
<div class="t" style="left:962.00px;top:94.33px;font-size:9.5px;font-weight:400;color:#444;">s</div>
<div class="a" style="left:548px;top:48.5px;width:254px;height:272px;background:#fff;border:1px solid #c8c8c8;box-shadow:1px 2px 4px rgba(0,0,0,0.18)"></div>
<div class="a" style="left:549px;top:51px;width:252px;height:37.5px;background:#d2d2d2"></div>
<div class="a" style="left:585px;top:129px;width:216px;height:1px;background:#e1e1e1"></div>
<div class="a" style="left:549px;top:248.5px;width:252px;height:1px;background:#e1e1e1"></div>
<div class="t" style="left:592.40px;top:67.56px;font-size:10.4px;font-weight:700;color:#1e1e1e;transform:scaleX(0.8724);transform-origin:0 0;-webkit-text-stroke:0.2px #1e1e1e;"><u>R</u>eglas para resaltar celdas</div>
<div class="t" style="left:592.80px;top:107.06px;font-size:10.4px;font-weight:700;color:#1e1e1e;transform:scaleX(0.8874);transform-origin:0 0;-webkit-text-stroke:0.2px #1e1e1e;">R<u>e</u>glas para valores superiores e inferiores</div>
<div class="t" style="left:592.60px;top:148.26px;font-size:10.4px;font-weight:700;color:#1e1e1e;transform:scaleX(0.8761);transform-origin:0 0;-webkit-text-stroke:0.2px #1e1e1e;">Barras de <u>d</u>atos</div>
<div class="t" style="left:592.60px;top:186.96px;font-size:10.4px;font-weight:700;color:#1e1e1e;transform:scaleX(0.8344);transform-origin:0 0;-webkit-text-stroke:0.2px #1e1e1e;">E<u>s</u>calas de color</div>
<div class="t" style="left:592.60px;top:226.16px;font-size:10.4px;font-weight:700;color:#1e1e1e;transform:scaleX(0.8624);transform-origin:0 0;-webkit-text-stroke:0.2px #1e1e1e;"><u>C</u>onjuntos de iconos</div>
<div class="t" style="left:579.70px;top:257.87px;font-size:9.8px;font-weight:400;color:#262626;transform:scaleX(0.9574);transform-origin:0 0;"><u>N</u>ueva regla...</div>
<div class="t" style="left:579.70px;top:280.57px;font-size:9.8px;font-weight:400;color:#262626;transform:scaleX(0.9343);transform-origin:0 0;"><u>B</u>orrar reglas</div>
<div class="t" style="left:579.70px;top:303.07px;font-size:9.8px;font-weight:400;color:#262626;transform:scaleX(0.9758);transform-origin:0 0;"><u>A</u>dministrar reglas...</div>
<div class="a" style="left:801.5px;top:50px;width:160.5px;height:302.5px;background:#fff;border:1px solid #c8c8c8;box-shadow:1px 2px 4px rgba(0,0,0,0.18)"></div>
<div class="a" style="left:802.5px;top:326.5px;width:158.5px;height:1px;background:#e1e1e1"></div>
<div class="a" style="left:803.5px;top:247px;width:156.5px;height:39.5px;background:#d2d2d2;border:2px solid #f00;border-radius:1px"></div>
<div class="t" style="left:846.00px;top:69.26px;font-size:10.4px;font-weight:700;color:#1e1e1e;transform:scaleX(0.8607);transform-origin:0 0;-webkit-text-stroke:0.2px #1e1e1e;">Es <u>m</u>ayor que...</div>
<div class="t" style="left:846.00px;top:108.46px;font-size:10.4px;font-weight:700;color:#1e1e1e;transform:scaleX(0.8737);transform-origin:0 0;-webkit-text-stroke:0.2px #1e1e1e;"><u>E</u>s menor que...</div>
<div class="t" style="left:846.00px;top:147.16px;font-size:10.4px;font-weight:700;color:#1e1e1e;transform:scaleX(0.8830);transform-origin:0 0;-webkit-text-stroke:0.2px #1e1e1e;"><u>E</u>ntre...</div>
<div class="t" style="left:845.90px;top:186.66px;font-size:10.4px;font-weight:700;color:#1e1e1e;transform:scaleX(0.8135);transform-origin:0 0;-webkit-text-stroke:0.2px #1e1e1e;"><u>E</u>s igual a...</div>
<div class="t" style="left:845.60px;top:225.16px;font-size:10.4px;font-weight:700;color:#1e1e1e;transform:scaleX(0.9339);transform-origin:0 0;-webkit-text-stroke:0.2px #1e1e1e;"><u>T</u>exto que contiene...</div>
<div class="t" style="left:845.90px;top:263.76px;font-size:10.4px;font-weight:700;color:#1e1e1e;transform:scaleX(0.8967);transform-origin:0 0;-webkit-text-stroke:0.2px #1e1e1e;"><u>U</u>na fecha...</div>
<div class="t" style="left:845.90px;top:303.36px;font-size:10.4px;font-weight:700;color:#1e1e1e;transform:scaleX(0.8698);transform-origin:0 0;-webkit-text-stroke:0.2px #1e1e1e;">Valores <u>d</u>uplicados...</div>
<div class="t" style="left:833.00px;top:334.87px;font-size:9.8px;font-weight:400;color:#262626;transform:scaleX(0.9484);transform-origin:0 0;"><u>M</u>ás reglas...</div>
<svg class="a" style="left:0;top:0" width="970" height="529"><path d="M790.5 66.0 L794 69.3 L790.5 72.6" fill="none" stroke="#555" stroke-width="1"/><path d="M790.5 105.5 L794 108.8 L790.5 112.1" fill="none" stroke="#555" stroke-width="1"/><path d="M790.5 146.7 L794 150.0 L790.5 153.3" fill="none" stroke="#555" stroke-width="1"/><path d="M790.5 185.4 L794 188.7 L790.5 192.0" fill="none" stroke="#555" stroke-width="1"/><path d="M790.5 224.6 L794 227.9 L790.5 231.2" fill="none" stroke="#555" stroke-width="1"/><path d="M790.5 281 L794.5 285 L790.5 289" fill="none" stroke="#555" stroke-width="1"/><rect x="562.5" y="61.5" width="22.0" height="17.0" fill="#fff" stroke="none"/><path d="M562.5 67.5 H584.5" stroke="#b9b9b9" stroke-width="1"/><path d="M562.5 73.5 H584.5" stroke="#b9b9b9" stroke-width="1"/><path d="M568.5 61.5 V78.5" stroke="#6b6b6b" stroke-width="1"/><path d="M578.5 61.5 V78.5" stroke="#6b6b6b" stroke-width="1"/><rect x="562.5" y="61.5" width="22.0" height="17.0" fill="none" stroke="#6b6b6b" stroke-width="1"/><rect x="568.5" y="67.5" width="10.0" height="5" fill="#fcd79b" stroke="#f0a030" stroke-width="1"/><rect x="572.5" y="71.5" width="14.0" height="11.0" fill="#fff" stroke="#5f5f5f" stroke-width="1"/><path d="M582 74 L577.5 76.3 L582 78.6 M577.5 80.3 H582" fill="none" stroke="#444" stroke-width="0.9"/><rect x="562.5" y="100.5" width="22.0" height="17.0" fill="#fff" stroke="none"/><path d="M562.5 106.5 H584.5" stroke="#b9b9b9" stroke-width="1"/><path d="M562.5 112.5 H584.5" stroke="#b9b9b9" stroke-width="1"/><path d="M568.5 100.5 V117.5" stroke="#6b6b6b" stroke-width="1"/><path d="M578.5 100.5 V117.5" stroke="#6b6b6b" stroke-width="1"/><rect x="562.5" y="100.5" width="22.0" height="17.0" fill="none" stroke="#6b6b6b" stroke-width="1"/><rect x="568.5" y="100.5" width="10.0" height="17" fill="#fcd79b" stroke="#f0a030" stroke-width="1"/><path d="M573.5 103 V111 M571 105.5 L573.5 102.5 L576 105.5" fill="none" stroke="#444" stroke-width="0.9"/><rect x="572.5" y="106.5" width="14.0" height="15.0" fill="#fff" stroke="#5f5f5f" stroke-width="1"/><text x="574.5" y="119.6" font-family="Liberation Sans" font-size="8.5" fill="#666" letter-spacing="-0.6">10</text><rect x="562.5" y="141.5" width="23.0" height="18.0" fill="#fff" stroke="none"/><path d="M562.5 147.5 H585.5" stroke="#b9b9b9" stroke-width="1"/><path d="M562.5 153.5 H585.5" stroke="#b9b9b9" stroke-width="1"/><path d="M566.5 141.5 V159.5" stroke="#6b6b6b" stroke-width="1"/><path d="M581.5 141.5 V159.5" stroke="#6b6b6b" stroke-width="1"/><rect x="562.5" y="141.5" width="23.0" height="18.0" fill="none" stroke="#6b6b6b" stroke-width="1"/><rect x="566.5" y="141.5" width="7" height="6" fill="#6aaee8" stroke="#2b7cd3" stroke-width="0.8"/><rect x="566.5" y="147.5" width="3" height="6" fill="#6aaee8" stroke="#2b7cd3" stroke-width="0.8"/><rect x="566.5" y="153.5" width="5" height="6" fill="#6aaee8" stroke="#2b7cd3" stroke-width="0.8"/><rect x="562.5" y="141.5" width="23" height="18" fill="none" stroke="#6b6b6b"/><rect x="562.5" y="180.5" width="23.0" height="18.0" fill="#fff" stroke="none"/><path d="M562.5 186.5 H585.5" stroke="#b9b9b9" stroke-width="1"/><path d="M562.5 192.5 H585.5" stroke="#b9b9b9" stroke-width="1"/><path d="M566.5 180.5 V198.5" stroke="#6b6b6b" stroke-width="1"/><path d="M581.5 180.5 V198.5" stroke="#6b6b6b" stroke-width="1"/><rect x="562.5" y="180.5" width="23.0" height="18.0" fill="none" stroke="#6b6b6b" stroke-width="1"/><rect x="566.5" y="180.5" width="15" height="6" fill="#73b3ec" stroke="#3a8ad8" stroke-width="0.8"/><rect x="566.5" y="186.5" width="15" height="6" fill="#fbd38a" stroke="#e8a83a" stroke-width="0.8"/><rect x="566.5" y="192.5" width="15" height="6" fill="#f7868a" stroke="#e04650" stroke-width="0.8"/><rect x="562.5" y="180.5" width="23" height="18" fill="none" stroke="#6b6b6b"/><rect x="562.5" y="219.5" width="23.0" height="18.0" fill="#fff" stroke="none"/><path d="M562.5 225.5 H585.5" stroke="#b9b9b9" stroke-width="1"/><path d="M562.5 231.5 H585.5" stroke="#b9b9b9" stroke-width="1"/><path d="M566.5 219.5 V237.5" stroke="#6b6b6b" stroke-width="1"/><path d="M581.5 219.5 V237.5" stroke="#6b6b6b" stroke-width="1"/><rect x="562.5" y="219.5" width="23.0" height="18.0" fill="none" stroke="#6b6b6b" stroke-width="1"/><circle cx="569.3" cy="222.5" r="1.3" fill="#2b7cd3"/><circle cx="569.3" cy="228.5" r="1.3" fill="#e84c4c"/><circle cx="569.3" cy="234.5" r="1.3" fill="#2b7cd3"/><path d="M574 222.5 H579.5 M574 228.5 H579.5 M574 234.5 H579.5" stroke="#777" stroke-width="1"/><rect x="559.5" y="256.5" width="12.0" height="11.0" fill="#fff" stroke="none"/><path d="M559.5 259.5 H571.5" stroke="#b9b9b9" stroke-width="1"/><path d="M559.5 264.5 H571.5" stroke="#b9b9b9" stroke-width="1"/><path d="M562.5 256.5 V267.5" stroke="#6b6b6b" stroke-width="1"/><path d="M568.5 256.5 V267.5" stroke="#6b6b6b" stroke-width="1"/><rect x="559.5" y="256.5" width="12.0" height="11.0" fill="none" stroke="#6b6b6b" stroke-width="1"/><rect x="562.5" y="259.5" width="6" height="5" fill="#fcd79b" stroke="#f0a030" stroke-width="1"/><rect x="559.5" y="278.5" width="12.0" height="11.0" fill="#fff" stroke="none"/><path d="M559.5 281.5 H571.5" stroke="#b9b9b9" stroke-width="1"/><path d="M559.5 286.5 H571.5" stroke="#b9b9b9" stroke-width="1"/><path d="M562.5 278.5 V289.5" stroke="#6b6b6b" stroke-width="1"/><path d="M568.5 278.5 V289.5" stroke="#6b6b6b" stroke-width="1"/><rect x="559.5" y="278.5" width="12.0" height="11.0" fill="none" stroke="#6b6b6b" stroke-width="1"/><rect x="562.5" y="281.5" width="6" height="5" fill="#fcd79b" stroke="#f0a030" stroke-width="1"/><path d="M565.2 289.3 L570 284.2 L572.8 286.8 L568 291.9 Z" fill="#b86fd8" stroke="#9b4fc0" stroke-width="0.7"/><path d="M567.5 288.2 L570.3 285.6" stroke="#fff" stroke-width="0.8"/><path d="M558.5 310.5 V300.5 H569.5" fill="none" stroke="#888" stroke-width="1"/><rect x="560.5" y="301.5" width="12.0" height="12.0" fill="#fff" stroke="none"/><path d="M560.5 304.5 H572.5" stroke="#b9b9b9" stroke-width="1"/><path d="M560.5 310.5 H572.5" stroke="#b9b9b9" stroke-width="1"/><path d="M563.5 301.5 V313.5" stroke="#6b6b6b" stroke-width="1"/><path d="M569.5 301.5 V313.5" stroke="#6b6b6b" stroke-width="1"/><rect x="560.5" y="301.5" width="12.0" height="12.0" fill="none" stroke="#6b6b6b" stroke-width="1"/><rect x="563.5" y="304.5" width="6" height="6" fill="#fcd79b" stroke="#f0a030" stroke-width="1"/><rect x="815.5" y="62.5" width="23.0" height="18.0" fill="#fff" stroke="none"/><path d="M815.5 68.5 H838.5" stroke="#b9b9b9" stroke-width="1"/><path d="M815.5 74.5 H838.5" stroke="#b9b9b9" stroke-width="1"/><path d="M821.5 62.5 V80.5" stroke="#6b6b6b" stroke-width="1"/><path d="M832.5 62.5 V80.5" stroke="#6b6b6b" stroke-width="1"/><rect x="815.5" y="62.5" width="23.0" height="18.0" fill="none" stroke="#6b6b6b" stroke-width="1"/><rect x="821.5" y="68.5" width="11" height="6" fill="#fcd79b" stroke="#f0a030"/><rect x="825.5" y="73.5" width="15.0" height="11.0" fill="#fff" stroke="#5f5f5f" stroke-width="1"/><path d="M830.5 76.5 L835.5 79 L830.5 81.5" fill="none" stroke="#444" stroke-width="0.9"/><rect x="815.5" y="101.5" width="23.0" height="18.0" fill="#fff" stroke="none"/><path d="M815.5 107.5 H838.5" stroke="#b9b9b9" stroke-width="1"/><path d="M815.5 113.5 H838.5" stroke="#b9b9b9" stroke-width="1"/><path d="M821.5 101.5 V119.5" stroke="#6b6b6b" stroke-width="1"/><path d="M832.5 101.5 V119.5" stroke="#6b6b6b" stroke-width="1"/><rect x="815.5" y="101.5" width="23.0" height="18.0" fill="none" stroke="#6b6b6b" stroke-width="1"/><rect x="821.5" y="107.5" width="11" height="6" fill="#fcd79b" stroke="#f0a030"/><rect x="825.5" y="112.5" width="15.0" height="11.0" fill="#fff" stroke="#5f5f5f" stroke-width="1"/><path d="M835.5 115.5 L830.5 118 L835.5 120.5" fill="none" stroke="#444" stroke-width="0.9"/><rect x="815.5" y="140.5" width="23.0" height="18.0" fill="#fff" stroke="none"/><path d="M815.5 146.5 H838.5" stroke="#b9b9b9" stroke-width="1"/><path d="M815.5 152.5 H838.5" stroke="#b9b9b9" stroke-width="1"/><path d="M821.5 140.5 V158.5" stroke="#6b6b6b" stroke-width="1"/><path d="M832.5 140.5 V158.5" stroke="#6b6b6b" stroke-width="1"/><rect x="815.5" y="140.5" width="23.0" height="18.0" fill="none" stroke="#6b6b6b" stroke-width="1"/><rect x="815.5" y="140.5" width="6" height="6" fill="#6aaee8" stroke="#2b7cd3"/><rect x="832.5" y="140.5" width="6" height="6" fill="#6aaee8" stroke="#2b7cd3"/><path d="M821.5 140.5 H832.5" stroke="#2b7cd3"/><rect x="821.5" y="146.5" width="11" height="6" fill="#fcd79b" stroke="#f0a030"/><rect x="815.5" y="180.5" width="23.0" height="18.0" fill="#fff" stroke="none"/><path d="M815.5 186.5 H838.5" stroke="#b9b9b9" stroke-width="1"/><path d="M815.5 192.5 H838.5" stroke="#b9b9b9" stroke-width="1"/><path d="M821.5 180.5 V198.5" stroke="#6b6b6b" stroke-width="1"/><path d="M832.5 180.5 V198.5" stroke="#6b6b6b" stroke-width="1"/><rect x="815.5" y="180.5" width="23.0" height="18.0" fill="none" stroke="#6b6b6b" stroke-width="1"/><rect x="821.5" y="186.5" width="11" height="6" fill="#fcd79b" stroke="#f0a030"/><rect x="825.5" y="191.5" width="15.0" height="11.0" fill="#fff" stroke="#5f5f5f" stroke-width="1"/><path d="M830 196 H836 M830 198.5 H836" fill="none" stroke="#555" stroke-width="1"/><rect x="815.5" y="218.5" width="23.0" height="18.0" fill="#fff" stroke="none"/><path d="M815.5 224.5 H838.5" stroke="#b9b9b9" stroke-width="1"/><path d="M815.5 230.5 H838.5" stroke="#b9b9b9" stroke-width="1"/><path d="M821.5 218.5 V236.5" stroke="#6b6b6b" stroke-width="1"/><path d="M832.5 218.5 V236.5" stroke="#6b6b6b" stroke-width="1"/><rect x="815.5" y="218.5" width="23.0" height="18.0" fill="none" stroke="#6b6b6b" stroke-width="1"/><rect x="821.5" y="224.5" width="11" height="6" fill="#fcd79b" stroke="#f0a030"/><rect x="825.5" y="229.5" width="15.0" height="11.0" fill="#fff" stroke="#5f5f5f" stroke-width="1"/><text x="829.5" y="238.5" font-family="Liberation Sans" font-size="9" fill="#444">a</text><rect x="815.5" y="257.5" width="23.0" height="18.0" fill="#fff" stroke="none"/><path d="M815.5 263.5 H838.5" stroke="#b9b9b9" stroke-width="1"/><path d="M815.5 269.5 H838.5" stroke="#b9b9b9" stroke-width="1"/><path d="M821.5 257.5 V275.5" stroke="#6b6b6b" stroke-width="1"/><path d="M832.5 257.5 V275.5" stroke="#6b6b6b" stroke-width="1"/><rect x="815.5" y="257.5" width="23.0" height="18.0" fill="none" stroke="#6b6b6b" stroke-width="1"/><rect x="821.5" y="263.5" width="11" height="6" fill="#fcd79b" stroke="#f0a030"/><rect x="828.5" y="267.5" width="12.0" height="12.0" fill="#fff" stroke="#5f5f5f" stroke-width="1"/><path d="M828.5 270 H840.5" stroke="#5f5f5f"/><rect x="815.5" y="296.5" width="23.0" height="18.0" fill="#fff" stroke="none"/><path d="M815.5 302.5 H838.5" stroke="#b9b9b9" stroke-width="1"/><path d="M815.5 308.5 H838.5" stroke="#b9b9b9" stroke-width="1"/><path d="M821.5 296.5 V314.5" stroke="#6b6b6b" stroke-width="1"/><path d="M832.5 296.5 V314.5" stroke="#6b6b6b" stroke-width="1"/><rect x="815.5" y="296.5" width="23.0" height="18.0" fill="none" stroke="#6b6b6b" stroke-width="1"/><rect x="821.5" y="296.5" width="11" height="6" fill="#fcd79b" stroke="#f0a030"/><rect x="821.5" y="308.5" width="11" height="6" fill="#fcd79b" stroke="#f0a030"/></svg>
<div class="t" style="left:591.48px;top:290.45px;font-size:11px;font-weight:400;color:rgba(150,150,150,0.55);transform:scaleX(1.0772);transform-origin:0 0;">www.ninjadelexcel.com</div>
<svg class="a" style="left:0;top:0" width="970" height="529"><path d="M519.5 93 L617 49.5" stroke="#f50f0f" stroke-width="3" stroke-linecap="round"/><path d="M624.5 45.2 L612.5 47.3 L617.8 53.8 Z" fill="#f50f0f" stroke="#f50f0f" stroke-width="1.5" stroke-linejoin="round"/></svg>
<div class="a" style="left:0;top:526px;width:970px;height:3px;background:#d6d6d6"></div>
<div class="a" style="left:82px;top:525px;width:57px;height:4px;background:#fff"></div></body></html>
